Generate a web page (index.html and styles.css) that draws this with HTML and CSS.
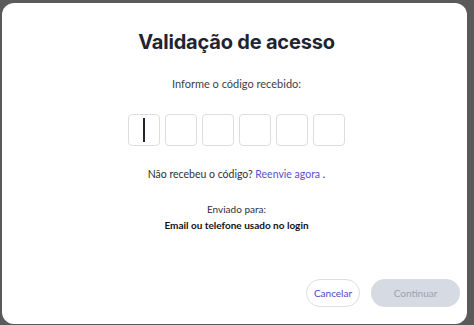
FILE: index.html
```html
<!DOCTYPE html>
<html lang="pt">
<head>
<meta charset="utf-8">
<link rel="stylesheet" href="styles.css">
</head>
<body>
<div class="modal">
  <h1 class="title">Validação de acesso</h1>
  <p class="lead">Informe o código recebido:</p>
  <div class="code">
    <div class="digit active"><span class="caret"></span></div>
    <div class="digit"></div>
    <div class="digit"></div>
    <div class="digit"></div>
    <div class="digit"></div>
    <div class="digit"></div>
  </div>
  <p class="resend">Não recebeu o código? <a class="link">Reenvie agora</a> .</p>
  <p class="sent">Enviado para:</p>
  <p class="target">Email ou telefone usado no login</p>
  <div class="actions">
    <button class="btn cancel">Cancelar</button>
    <button class="btn next">Continuar</button>
  </div>
</div>
</body>
</html>
```
FILE: styles.css
```css
html, body {
  margin: 0;
  height: 100%;
}
body {
  background: #5a5a5a;
  font-family: Lato, "Noto Sans", sans-serif;
  overflow: hidden;
}
.modal {
  margin: 3px 0 0 2px;
  width: 465px;
  height: 321px;
  box-sizing: border-box;
  background: #fff;
  border-radius: 12px;
  padding: 26px 0 0 4px;
  display: flex;
  flex-direction: column;
  align-items: center;
}
.title {
  margin: 0;
  font-family: Inter, "Noto Sans", sans-serif;
  font-size: 20px;
  line-height: 26px;
  font-weight: 700;
  color: #1f2332;
  letter-spacing: -0.2px;
}
.lead {
  margin: 22px 0 0;
  font-size: 11px;
  line-height: 14px;
  color: #3d404a;
}
.code {
  margin-top: 23px;
  display: flex;
  gap: 5px;
}
.digit {
  width: 32px;
  height: 32px;
  box-sizing: border-box;
  border: 1px solid #dcdde1;
  border-radius: 4px;
  display: flex;
  align-items: center;
  justify-content: center;
}
.caret {
  width: 2px;
  height: 24px;
  background: #22242c;
}
.resend {
  margin: 21px 0 0;
  font-size: 10.5px;
  line-height: 14px;
  color: #2c2f38;
}
.link {
  color: #5a4fcf;
}
.sent {
  margin: 22px 0 0;
  font-size: 10px;
  line-height: 13px;
  color: #2c2f38;
}
.target {
  margin: 3px 0 0;
  font-size: 10px;
  line-height: 13px;
  font-weight: 700;
  color: #111;
}
.actions {
  margin-top: auto;
  margin-bottom: 17px;
  align-self: flex-end;
  margin-right: 7px;
  display: flex;
  gap: 11px;
}
.btn {
  height: 28px;
  border-radius: 14px;
  font-family: inherit;
  font-size: 10px;
  padding: 0;
}
.cancel {
  width: 54px;
  background: #fff;
  border: 1px solid #dcdde1;
  color: #4f46c8;
}
.next {
  width: 89px;
  background: #d5dae3;
  border: none;
  color: #9aa3b2;
}
```
